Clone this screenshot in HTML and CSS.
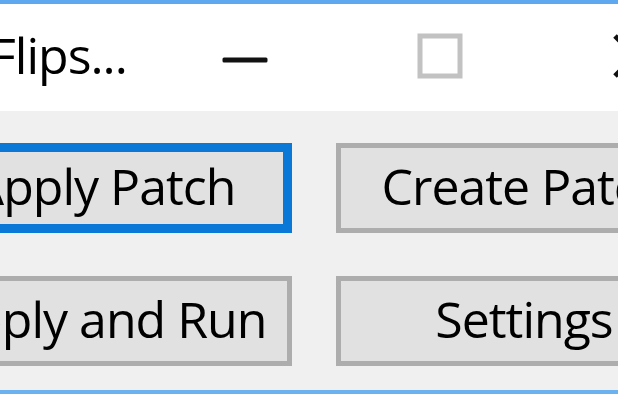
FILE: index.html
```html
<!DOCTYPE html>
<html lang="en">
<head>
    <meta charset="UTF-8" />
    <title>Flips...</title>
    <link rel="stylesheet" href="styles.css">
</head>
<body>

    <!-- 窗口 -->
    <div class="window">

        <!-- 标题栏 -->
        <div class="titlebar">
            <span class="title">Flips...</span>
            <div class="caption-buttons">
                <span class="cap-btn min">
                    <svg width="46" height="6" viewBox="0 0 46 6">
                        <rect x="0.5" y="0.5" width="45" height="5" rx="1.5" fill="#111"/>
                    </svg>
                </span>
                <span class="cap-btn">
                    <svg width="46" height="46" viewBox="0 0 46 46">
                        <rect x="3" y="3" width="40" height="40" fill="none" stroke="#c2c2c2" stroke-width="5"/>
                    </svg>
                </span>
                <span class="cap-btn">
                    <svg width="46" height="46" viewBox="0 0 46 46">
                        <path d="M3 3 L43 43 M43 3 L3 43" stroke="#111" stroke-width="5"/>
                    </svg>
                </span>
            </div>
        </div>

        <!-- 按钮区域 -->
        <div class="client">
            <button class="btn focused">Apply Patch</button>
            <button class="btn">Create Patch</button>
            <button class="btn">Apply and Run</button>
            <button class="btn">Settings</button>
        </div>

    </div>

</body>
</html>
```

FILE: styles.css
```css
/* 页面 */
html, body {
    margin: 0;
    padding: 0;
    width: 618px;
    height: 394px;
    overflow: hidden;
    background: #f0f0f0;
}

body {
    font-family: 'Open Sans', 'Noto Sans', 'DejaVu Sans', sans-serif;
    color: #000;
}

/* 窗口, 放大后只看得到一部分 */
.window {
    width: 826px;
    margin-left: -94px;
    border-top: 4px solid #5ea8ef;
    border-bottom: 5px solid #6cb2f1;
    box-shadow: inset 0 1px 0 #9fcbf5;
    filter: blur(0.6px);
}

/* 标题栏 */
.titlebar {
    height: 107px;
    background: #fff;
    display: flex;
    align-items: center;
}

.title {
    padding-left: 84px;
    font-size: 50px;
    letter-spacing: -1px;
    margin-top: -6px;
}

.caption-buttons {
    margin-left: auto;
    display: flex;
    height: 100%;
}

.cap-btn {
    width: 195px;
    display: flex;
    align-items: center;
    justify-content: center;
    padding-bottom: 3px;
}

.cap-btn.min {
    padding-bottom: 0;
    padding-top: 4px;
}

/* 按钮区域 */
.client {
    background: #f0f0f0;
    padding: 32px 20px 24px 10px;
    display: grid;
    grid-template-columns: 376px 376px;
    gap: 43px 44px;
}

.btn {
    height: 90px;
    background: #e1e1e1;
    border: 5px solid #adadad;
    font-family: inherit;
    font-size: 50px;
    letter-spacing: -1px;
    color: #000;
    padding: 0 0 4px;
    display: flex;
    align-items: center;
    justify-content: center;
}

/* 焦点按钮, 蓝色边框 */
.btn.focused {
    border: 9px solid #0a78d7;
}
```
